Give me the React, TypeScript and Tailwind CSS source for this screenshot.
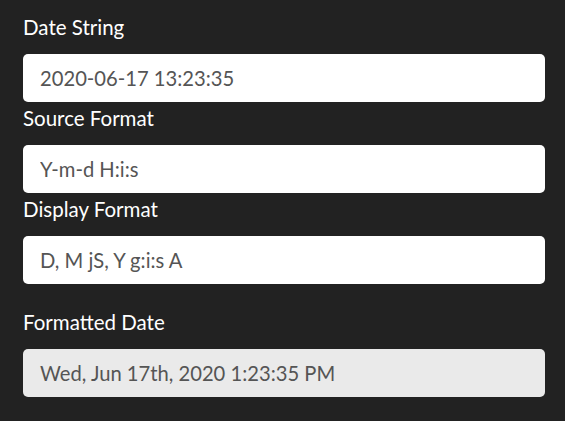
const fields = [
  { label: "Date String", value: "2020-06-17 13:23:35" },
  { label: "Source Format", value: "Y-m-d H:i:s" },
  { label: "Display Format", value: "D, M jS, Y g:i:s A" },
];

export default function App() {
  return (
    <div className="min-h-screen bg-[#222222] pl-[23px] pr-[20px] pt-[11px] font-['Lato',sans-serif]">
      {fields.map((f) => (
        <div key={f.label}>
          <label className="mb-[11px] block text-[20.5px] leading-[32px] text-white">{f.label}</label>
          <input
            readOnly
            value={f.value}
            className="block h-[48px] w-full rounded-[5px] bg-white pl-[17px] text-[20.2px] text-[#555555] outline-none"
          />
        </div>
      ))}
      <div className="mt-[22px]">
        <label className="mb-[11px] block text-[20.5px] leading-[32px] text-white">Formatted Date</label>
        <div className="flex h-[48px] w-full items-center rounded-[5px] bg-[#eaeaea] pl-[17px] text-[20.2px] text-[#555555]">
          Wed, Jun 17th, 2020 1:23:35 PM
        </div>
      </div>
    </div>
  );
}
